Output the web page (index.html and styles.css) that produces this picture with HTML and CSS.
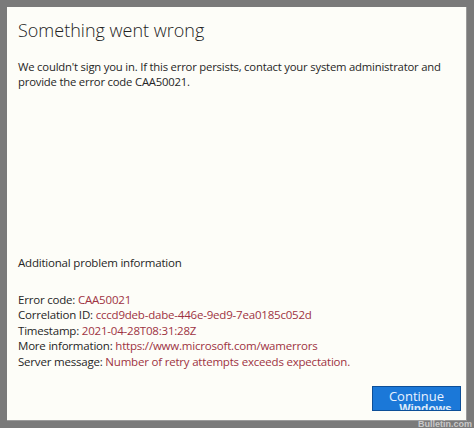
FILE: index.html
```html
<!DOCTYPE html>
<html lang="en">
<head>
    <meta charset="UTF-8">
    <title>Something went wrong</title>
    <link rel="stylesheet" href="styles.css">
</head>
<body>
    <div class="dialog">
        <h1>Something went wrong</h1>
        <p class="message">We couldn't sign you in. If this error persists, contact your system administrator and provide the error code CAA50021.</p>

        <div class="details">
            <h2>Additional problem information</h2>
            <ul class="info">
                <li>Error code: <span class="val">CAA50021</span></li>
                <li>Correlation ID: <span class="val">cccd9deb-dabe-446e-9ed9-7ea0185c052d</span></li>
                <li>Timestamp: <span class="val">2021-04-28T08:31:28Z</span></li>
                <li>More information: <span class="val">https://www.microsoft.com/wamerrors</span></li>
                <li>Server message: <span class="val">Number of retry attempts exceeds expectation.</span></li>
            </ul>
        </div>

        <div class="actions">
            <button class="continue">
                <span class="label">Continue</span>
                <span class="mark-top">Windows</span>
            </button>
        </div>
    </div>
    <span class="mark-bottom">Bulletin.com</span>
</body>
</html>
```

FILE: styles.css
```css
html, body {
    margin: 0;
    height: 100%;
}
body {
    background-color: #7a7a7a;
    font-family: "Open Sans", "Noto Sans", Arial, sans-serif;
    color: #262626;
    position: relative;
    overflow: hidden;
}
.dialog {
    margin: 7px 7px 0 7px;
    height: 414px;
    box-sizing: border-box;
    background-color: #fdfdf8;
    padding: 0 5px 0 11px;
    display: flex;
    flex-direction: column;
    border-right: 1px solid #9a9a9a;
    border-bottom: 1px solid #9a9a9a;
}
h1 {
    font-weight: 300;
    font-size: 18px;
    line-height: 24px;
    margin: 11px 0 0 0;
    color: #222;
}
.message {
    font-size: 11.3px;
    line-height: 15px;
    margin: 17px 0 0 0;
    letter-spacing: -0.2px;
}
.details {
    margin-top: auto;
}
h2 {
    font-weight: 400;
    font-size: 11.5px;
    line-height: 16px;
    margin: 0;
    letter-spacing: -0.2px;
}
.info {
    list-style: none;
    margin: 21px 0 0 0;
    padding: 0;
    font-size: 11.5px;
    line-height: 15.5px;
    letter-spacing: -0.2px;
}
.val {
    color: #9e3342;
}
.actions {
    display: flex;
    justify-content: flex-end;
    margin: 17px 0 9px 0;
}
.continue {
    width: 89px;
    height: 25px;
    background-color: #1b78d8;
    border: 1px solid #0d4f98;
    color: #e8f2ff;
    font-family: inherit;
    font-size: 13px;
    padding: 2px 0 0 0;
    display: flex;
    flex-direction: column;
    align-items: center;
    overflow: hidden;
}
.label {
    line-height: 14px;
}
.mark-top {
    font-family: "Liberation Sans", Arial, sans-serif;
    font-weight: bold;
    font-size: 12px;
    line-height: 12px;
    color: rgba(255, 255, 255, 0.85);
    margin: 0 0 0 18px;
}
.mark-bottom {
    position: absolute;
    right: 2px;
    bottom: -1px;
    font-family: "Liberation Sans", Arial, sans-serif;
    font-weight: bold;
    font-size: 9px;
    line-height: 9px;
    color: rgba(255, 255, 255, 0.6);
}
```
